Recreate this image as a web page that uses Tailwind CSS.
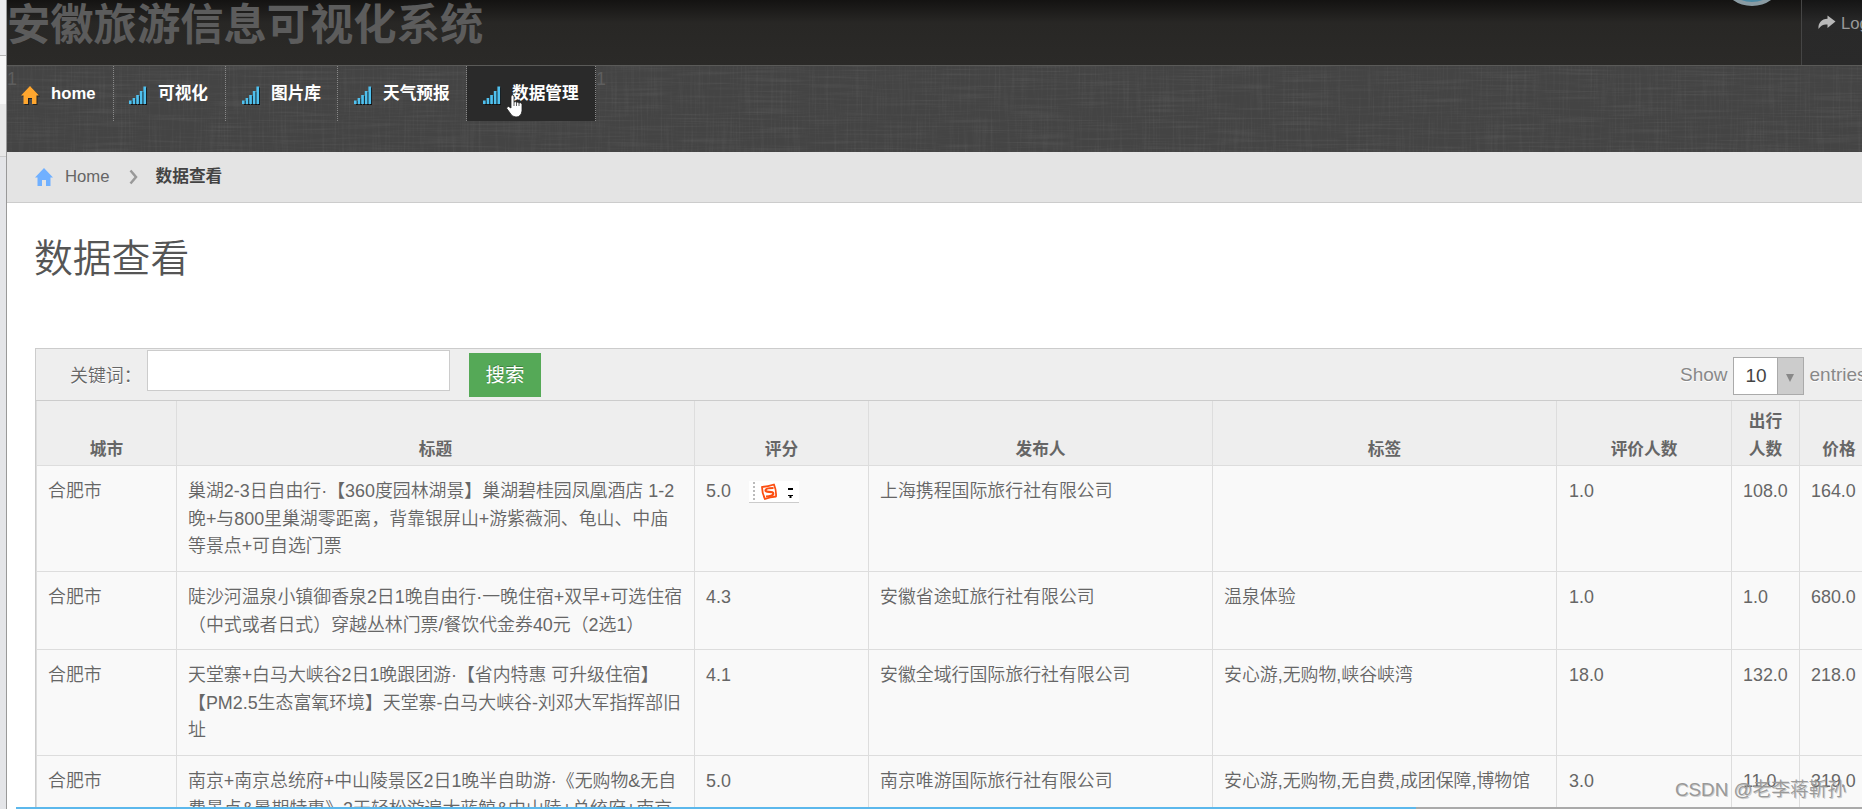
<!DOCTYPE html>
<html lang="zh-CN">
<head>
  <meta charset="UTF-8">
  <meta name="viewport" content="width=device-width, initial-scale=1.0">
  <title>安徽旅游信息可视化系统</title>
  <script src="https://cdn.jsdelivr.net/npm/@tailwindcss/browser@4"></script>
</head>
<body class="h-[809px] overflow-hidden bg-white font-['Liberation_Sans','Noto_Sans_CJK_SC',sans-serif] text-[#666] [text-spacing-trim:space-all]">

  <svg class="absolute size-0">
    <symbol id="bars" viewBox="0 0 18 20">
      <path fill="#111" d="M2 15h2.500v4H2zM5.500 12.500H8V19H5.500zM9 10h2.500v9H9zM12.500 6H15v13h-2.500zM15.500 1.500H18V19h-2.500z"/>
      <path fill="#4fc0ee" d="M0 14.500h2.700v3.500H0zM3.600 12h2.700v6H3.600zM7.200 9h2.700v9H7.200zM10.800 5h2.700v13h-2.700zM14.400 0.500h2.700V18h-2.700z"/>
    </symbol>
    <symbol id="house" viewBox="0 0 18 18">
      <path d="M9 0L18 9.500H15.500V18H11V12H7V18H2.500V9.500H0z"/>
    </symbol>
    <!-- woven cloth, horizontal and vertical threads -->
    <filter id="threadsX" x="0" y="0" width="100%" height="100%">
      <feTurbulence type="fractalNoise" baseFrequency="0.015 0.5" numOctaves="2" seed="4"/>
      <feColorMatrix values="0 0 0 0 1  0 0 0 0 1  0 0 0 0 1  0.9 0 0 0 -0.4"/>
    </filter>
    <filter id="threadsY" x="0" y="0" width="100%" height="100%">
      <feTurbulence type="fractalNoise" baseFrequency="0.5 0.02" numOctaves="2" seed="9"/>
      <feColorMatrix values="0 0 0 0 1  0 0 0 0 1  0 0 0 0 1  0.8 0 0 0 -0.36"/>
    </filter>
  </svg>

  <div class="relative flex h-[809px] w-[1862px] overflow-hidden">
    <!-- edge of the window behind -->
    <div class="flex w-[7px] shrink-0 flex-col border-r border-[#999] bg-[#e4e5e8]">
      <div class="h-[56px] border-b border-[#b5b5b5] bg-[#ececee]"></div>
      <div class="h-[48px] bg-[#f7f7f7]"></div>
      <div class="h-[53px] border-b border-[#ccc] bg-[#e8e8e8]"></div>
    </div>

    <div class="w-[1855px] shrink-0">
      <!-- header -->
      <div class="relative flex h-[65px] justify-between overflow-hidden bg-linear-to-b from-[#141312] via-[#282725] via-35% to-[#2b2a28]">
        <h1 class="-mt-[6px] text-[43.300px] leading-[62px] font-bold whitespace-nowrap text-[#5c5c5c]">安徽旅游信息可视化系统</h1>
        <div class="absolute -top-[60px] left-[1712px] size-[66px] rounded-full border-4 border-[#8a9ba3] bg-[#4b89a3]"></div>
        <div class="flex w-[61px] overflow-hidden border-l border-[#454545] bg-linear-to-b from-[#151515] via-[#292929] via-35% to-[#2a2a2a] pt-[13px] pl-[16px]">
          <svg class="mt-[2px] mr-[5px] h-[15px] w-[18px] shrink-0" viewBox="0 0 18 15"><path fill="#b8b8b8" d="M9.500 0.500L17.500 6.500L9.500 13V9.500C6 9 3 10 0.500 14C0 8 3.500 4 9.500 3.800z"/></svg>
          <span class="text-[16.700px] leading-[21px] text-[#999]">Logout</span>
        </div>
      </div>

      <!-- navigation -->
      <div class="relative h-[87px] border-t border-[#5a5a58] bg-[#444]">
        <svg class="absolute inset-0 h-[86px] w-[1855px]">
          <rect width="1855" height="86" filter="url(#threadsX)" opacity="0.14"/>
          <rect width="1855" height="86" filter="url(#threadsY)" opacity="0.11"/>
        </svg>
        <div class="relative flex h-[55px] text-[16.700px] leading-[20px] font-bold text-white">
          <div class="relative flex w-[107px] border-r border-dotted border-[#888] pt-[18px] pl-[14px]">
            <span class="absolute top-[3px] left-0 text-[18px] font-normal text-[#5e5e5e]">1</span>
            <svg class="mt-[2px] mr-[12px] size-[18px] fill-[#ffa62e] drop-shadow-[1px_1px_0_#222]"><use href="#house"/></svg>home
          </div>
          <div class="flex w-[112px] border-r border-dotted border-[#888] pt-[18px] pl-[15px]">
            <svg class="mt-[2px] mr-[11px] h-[20px] w-[18px]"><use href="#bars"/></svg>可视化
          </div>
          <div class="flex w-[112px] border-r border-dotted border-[#888] pt-[18px] pl-[16px]">
            <svg class="mt-[2px] mr-[11px] h-[20px] w-[18px]"><use href="#bars"/></svg>图片库
          </div>
          <div class="flex w-[129px] border-r border-dotted border-[#888] pt-[18px] pl-[16px]">
            <svg class="mt-[2px] mr-[11px] h-[20px] w-[18px]"><use href="#bars"/></svg>天气预报
          </div>
          <div class="flex w-[129px] border-r border-dotted border-[#888] bg-[#2a2a2a] pt-[18px] pl-[16px]">
            <svg class="mt-[2px] mr-[11px] h-[20px] w-[18px]"><use href="#bars"/></svg>数据管理
          </div>
          <span class="pt-[3px] text-[18px] font-normal text-[#5e5e5e]">1</span>
        </div>
      </div>

      <!-- breadcrumb -->
      <div class="flex h-[51px] items-center border-b border-[#ccc] bg-[#e4e4e4] pb-px pl-[28px] text-[16.700px]">
        <svg class="size-[18px] fill-[#70b0ff]"><use href="#house"/></svg>
        <span class="ml-[12px]">Home</span>
        <svg class="ml-[19px] h-[16px] w-[9px]" viewBox="0 0 9 16"><path d="M1.500 1.500L7 8L1.500 14.500" fill="none" stroke="#999" stroke-width="2.500"/></svg>
        <span class="ml-[18px] font-bold text-[#444]">数据查看</span>
      </div>

      <h2 class="mt-[31px] ml-[27px] h-[114px] text-[38.800px] leading-[50px] font-[350] text-[#555]">数据查看</h2>

      <div class="ml-[28px] h-[461px] w-[1900px] border-t border-l border-[#ccc]">
        <!-- search bar -->
        <div class="flex h-[52px] border-b border-[#ccc] bg-[#eee] text-shadow-[0_1px_0_white]">
          <label class="mt-[13px] ml-[34px] w-[77px] text-[17.900px] leading-[28px] font-[350] whitespace-nowrap">关键词：</label>
          <div class="mt-px h-[41px] w-[303px] border border-[#ccc] bg-white"></div>
          <button class="mt-[4px] ml-[19px] h-[44px] w-[72px] bg-[#55a957] pb-px text-[19.400px] leading-[28px] text-white text-shadow-[0_-1px_0_#00000040]">搜索</button>
          <div class="ml-[1139px] flex text-[19px] text-[#888]">
            <span class="mt-[12px] leading-[28px]">Show</span>
            <div class="mt-[8px] ml-[5px] flex h-[38px] w-[71px] border border-[#aaa] bg-white">
              <span class="w-[44px] border-r border-[#aaa] pl-[12px] leading-[36px] text-[#444]">10</span>
              <div class="flex flex-1 items-center justify-center bg-[#ccc] pt-[3px]">
                <svg class="h-[8px] w-[8px]" viewBox="0 0 9 9"><path fill="#888" d="M0 0h9L4.500 9z"/></svg>
              </div>
            </div>
            <span class="mt-[12px] ml-[6px] leading-[28px]">entries</span>
          </div>
        </div>

        <table class="w-[1843px] table-fixed border-separate border-spacing-0 border-l border-[#ddd] bg-[#f9f9f9] text-[17.900px] leading-[27.500px] font-[350] [&_td]:border-r [&_td]:border-b [&_td]:border-[#ddd] [&_td]:pt-[12px] [&_td]:pl-[11px] [&_td]:align-top [&_td:nth-child(6)]:pl-[12px] [&_th]:border-r [&_th]:border-b [&_th]:border-[#ddd] [&_th]:pb-[2px]">
          <colgroup>
            <col class="w-[140px]"><col class="w-[518px]"><col class="w-[174px]"><col class="w-[344px]"><col class="w-[344px]"><col class="w-[175px]"><col class="w-[68px]"><col class="w-[79px]">
          </colgroup>
          <thead>
            <tr class="h-[65px] bg-[#eee] align-bottom text-[16.700px]">
              <th>城市</th>
              <th>标题</th>
              <th>评分</th>
              <th>发布人</th>
              <th>标签</th>
              <th>评价人数</th>
              <th>出行<br>人数</th>
              <th>价格</th>
            </tr>
          </thead>
          <tbody>
            <tr class="h-[106px]">
              <td>合肥市</td>
              <td class="whitespace-nowrap">巢湖2-3日自由行·【360度园林湖景】巢湖碧桂园凤凰酒店 1-2<br>晚+与800里巢湖零距离，背靠银屏山+游紫薇洞、龟山、中庙<br>等景点+可自选门票</td>
              <td>5.0</td>
              <td>上海携程国际旅行社有限公司</td>
              <td></td>
              <td>1.0</td>
              <td>108.0</td>
              <td>164.0</td>
            </tr>
            <tr class="h-[78px]">
              <td>合肥市</td>
              <td class="whitespace-nowrap">陡沙河温泉小镇御香泉2日1晚自由行·一晚住宿+双早+可选住宿<br>（中式或者日式）穿越丛林门票/餐饮代金券40元（2选1）</td>
              <td>4.3</td>
              <td>安徽省途虹旅行社有限公司</td>
              <td>温泉体验</td>
              <td>1.0</td>
              <td>1.0</td>
              <td>680.0</td>
            </tr>
            <tr class="h-[106px]">
              <td>合肥市</td>
              <td class="whitespace-nowrap">天堂寨+白马大峡谷2日1晚跟团游·【省内特惠 可升级住宿】<br>【PM2.5生态富氧环境】天堂寨-白马大峡谷-刘邓大军指挥部旧<br>址</td>
              <td>4.1</td>
              <td>安徽全域行国际旅行社有限公司</td>
              <td>安心游,无购物,峡谷峡湾</td>
              <td>18.0</td>
              <td>132.0</td>
              <td>218.0</td>
            </tr>
            <tr class="h-[106px]">
              <td>合肥市</td>
              <td class="whitespace-nowrap">南京+南京总统府+中山陵景区2日1晚半自助游·《无购物&amp;无自<br>费景点&amp;暑期特惠》2天轻松游遍大蓝鲸&amp;中山陵+总统府+南京</td>
              <td>5.0</td>
              <td>南京唯游国际旅行社有限公司</td>
              <td>安心游,无购物,无自费,成团保障,博物馆</td>
              <td>3.0</td>
              <td>11.0</td>
              <td>319.0</td>
            </tr>
          </tbody>
        </table>
      </div>
    </div>

    <!-- input method bar -->
    <div class="absolute top-[481px] left-[749px] flex h-[22px] w-[50px] items-center border-b border-[#ccc] bg-white">
      <svg class="h-[21px] w-[50px]" viewBox="0 0 50 21">
        <path d="M5 1v20" stroke="#bbb" stroke-width="2" stroke-dasharray="2 2"/>
        <path fill="#fff" stroke="#fc4f12" stroke-width="1.800" stroke-linejoin="round" d="M13 6Q19 5.500 25 3.500Q27.500 9.500 27 15.500Q21 16 16 18Q13 12 13 6z"/>
        <path d="M24.500 7Q16.500 7 16.500 9.300Q16.500 10.800 20 10.800Q24.500 10.800 24.300 12.800Q24 15 17 15.500" fill="none" stroke="#fc4f12" stroke-width="2.200"/>
        <path d="M39 7h5v2h-5zM39 14h5v1h-1.500v2h-2v-2H39z"/>
      </svg>
    </div>

    <!-- mouse pointer -->
    <svg class="absolute top-[94px] left-[506px] h-[24px] w-[18px]" viewBox="0 0 18 24">
      <path fill="#fff" stroke="#222" stroke-width="0.800" d="M5 2Q6.500 0 8 2V8Q9.500 7 10.500 8.500Q12 7.500 13 9Q15 8 16 10V17Q15 23 10 23Q6 23 4 19L0.800 14.500Q0.500 12.500 2.500 12.500L5 14z"/>
      <path fill="none" stroke="#333" stroke-width="0.800" d="M8 8v4M10.500 8.500V12M13 9v3"/>
    </svg>

    <!-- playback progress -->
    <div class="absolute bottom-0 left-[16px] h-[2px] w-[1846px] bg-[#aaa]"></div>
    <div class="absolute bottom-0 left-[16px] h-[2px] w-[1400px] bg-[#5cb8ec]"></div>
    <div class="absolute top-[776px] left-[1675px] text-[18.800px] leading-[28px] font-[350] whitespace-nowrap text-[#999] text-shadow-[1px_1px_0_#88888866]">CSDN @老李蒋靳孙</div>
  </div>

</body>
</html>
